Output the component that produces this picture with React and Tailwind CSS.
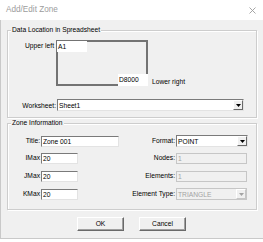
import React from 'react';

const sunken = "border-t border-l border-[#7a7a7a] border-r border-b border-r-[#e3e3e3] border-b-[#e3e3e3]";

function TextBox({ value, w, disabled }) {
  return (
    <div
      className={`h-[11px] ${w} flex items-center px-[1px] leading-[9px] ${
        disabled ? "bg-[#f0f0f0] border border-[#c6c6c6] text-[#a3a3a3]" : `bg-white ${sunken} text-black`
      }`}
    >
      {value}
    </div>
  );
}

function Combo({ value, w, disabled }) {
  return (
    <div
      className={`h-[12px] ${w} flex items-center ${
        disabled ? "bg-[#f0f0f0] border border-[#c6c6c6] text-[#a3a3a3]" : `bg-white ${sunken} text-black`
      }`}
    >
      <span className="flex-1 px-[1px] leading-[9px]">{value}</span>
      <div
        className={`h-[10px] w-[10px] flex items-center justify-center bg-[#f0f0f0] border border-t-white border-l-white ${
          disabled ? "border-r-[#c6c6c6] border-b-[#c6c6c6]" : "border-r-[#696969] border-b-[#696969]"
        }`}
      >
        <svg width="5" height="3" viewBox="0 0 5 3">
          <polygon points="0,0 5,0 2.5,3" fill={disabled ? "#a3a3a3" : "#000"} />
        </svg>
      </div>
    </div>
  );
}

function Group({ title, children, className }) {
  return (
    <div className={`relative ml-[6px] w-[250px] border border-[#cdcdcd] shadow-[1px_1px_0_#fff,inset_1px_1px_0_#fff] ${className}`}>
      <span className="absolute -top-[5px] left-[3px] px-[1px] bg-[#f0f0f0] leading-[8px] text-black">{title}</span>
      {children}
    </div>
  );
}

function Row({ left, right, className }) {
  return (
    <div className={`flex items-center h-[12px] ${className}`}>
      <div className="w-[111px] flex items-center">{left}</div>
      {right}
    </div>
  );
}

function Label({ text, w }) {
  return <span className={`${w} text-right leading-[12px] text-black`}>{text}</span>;
}

export default function App() {
  return (
    <div className="w-[263px] h-[242px] bg-white font-['Liberation_Sans',Arial,sans-serif] text-[6.7px]">
      {/* title bar */}
      <div className="h-[20px] bg-white flex items-center pl-[6px] pr-[7px]">
        <span className="text-[8.2px] text-[#9c9c9c] leading-[10px]">Add/Edit Zone</span>
        <svg className="ml-auto" width="7" height="7" viewBox="0 0 7 7">
          <path d="M0.5 0.5 L6.5 6.5 M6.5 0.5 L0.5 6.5" stroke="#9c9c9c" strokeWidth="0.9" />
        </svg>
      </div>

      {/* body */}
      <div className="h-[219px] bg-[#f0f0f0] border-l border-b border-[#c9c9c9] flex flex-col">
        <Group title="Data Location in Spreadsheet" className="mt-[10px] pt-[9px] pb-[6px]">
          <div className="flex items-start">
            <span className="w-[46px] text-right leading-[11px] text-black">Upper left</span>
            <div className="ml-[2px] w-[92px] h-[46px] border-2 border-[#737373] flex flex-col justify-between">
              <div className="w-[30px] h-[11px] -ml-[1px] -mt-[1px] bg-white px-[1px] leading-[11px] text-black">A1</div>
              <div className="self-end w-[30px] h-[12px] -mr-[2px] -mb-[2px] bg-white px-[1px] leading-[12px] text-black">D8000</div>
            </div>
            <span className="self-end ml-[4px] leading-[8px] text-black">Lower right</span>
          </div>
          <div className="flex items-center mt-[13px]">
            <span className="w-[48px] text-right leading-[11px] text-black">Worksheet:</span>
            <div className="ml-[1px]">
              <Combo value="Sheet1" w="w-[187px]" />
            </div>
          </div>
        </Group>

        <Group title="Zone Information" className="mt-[5px] pt-[11px] pb-[9px]">
          <Row
            left={<><Label text="Title:" w="w-[32px]" /><div className="ml-[1px]"><TextBox value="Zone 001" w="w-[78px]" /></div></>}
            right={<><Label text="Format:" w="w-[56px]" /><div className="ml-[1px]"><Combo value="POINT" w="w-[72px]" /></div></>}
          />
          <Row
            className="mt-[5px]"
            left={<><Label text="IMax" w="w-[32px]" /><div className="ml-[1px]"><TextBox value="20" w="w-[37px]" /></div></>}
            right={<><Label text="Nodes:" w="w-[56px]" /><div className="ml-[1px]"><TextBox value="1" w="w-[71px]" disabled /></div></>}
          />
          <Row
            className="mt-[6px]"
            left={<><Label text="JMax" w="w-[32px]" /><div className="ml-[1px]"><TextBox value="20" w="w-[37px]" /></div></>}
            right={<><Label text="Elements:" w="w-[56px]" /><div className="ml-[1px]"><TextBox value="1" w="w-[71px]" disabled /></div></>}
          />
          <Row
            className="mt-[6px]"
            left={<><Label text="KMax" w="w-[32px]" /><div className="ml-[1px]"><TextBox value="20" w="w-[37px]" /></div></>}
            right={<><Label text="Element Type:" w="w-[56px]" /><div className="ml-[1px]"><Combo value="TRIANGLE" w="w-[71px]" disabled /></div></>}
          />
        </Group>

        <div className="flex mt-[7px] pl-[76px] gap-[15px]">
          <button className="w-[47px] h-[14px] bg-[#f0f0f0] border border-t-white border-l-white border-r-[#696969] border-b-[#696969] shadow-[inset_-1px_-1px_0_#a0a0a0] text-black leading-[12px]">OK</button>
          <button className="w-[47px] h-[14px] bg-[#f0f0f0] border border-t-white border-l-white border-r-[#696969] border-b-[#696969] shadow-[inset_-1px_-1px_0_#a0a0a0] text-black leading-[12px]">Cancel</button>
        </div>
      </div>
    </div>
  );
}
